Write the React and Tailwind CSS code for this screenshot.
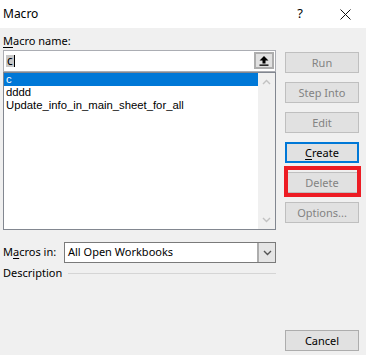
import React from 'react';

const font = { fontFamily: '"Noto Sans", "Open Sans", sans-serif' };

function DlgButton({ children, disabled, focused }) {
  return (
    <div
      className={
        'w-[74px] h-[21px] flex items-center justify-center text-[11px] leading-none ' +
        (focused
          ? 'border-2 border-[#0078d7] bg-[#e1e1e1] text-black'
          : disabled
          ? 'border border-[#bfbfbf] bg-[#e1e1e1] text-[#838383]'
          : 'border border-[#adadad] bg-[#e1e1e1] text-black')
      }
    >
      {children}
    </div>
  );
}

function Chevron({ up, className }) {
  return (
    <svg width="9" height="6" viewBox="0 0 9 6" className={className}>
      <path
        d={up ? 'M1 5 L4.5 1.5 L8 5' : 'M1 1 L4.5 4.5 L8 1'}
        fill="none"
        stroke="currentColor"
        strokeWidth="1.4"
      />
    </svg>
  );
}

export default function App() {
  const macros = ['c', 'dddd', 'Update_info_in_main_sheet_for_all'];

  return (
    <div className="w-[366px] h-[355px] bg-[#f0f0f0] flex flex-col relative text-black" style={font}>
      {/* Title bar */}
      <div className="h-[28px] bg-white flex items-center text-[12px] shrink-0">
        <span className="ml-[3px]">Macro</span>
        <span className="ml-auto mr-[37px] text-[13px]">?</span>
        <svg width="11" height="11" viewBox="0 0 11 11" className="mr-[15px]">
          <path d="M0.5 0.5 L10.5 10.5 M10.5 0.5 L0.5 10.5" stroke="#111" strokeWidth="1" />
        </svg>
      </div>

      <div className="flex flex-1">
        {/* Left column */}
        <div className="w-[276px] pl-[3px] flex flex-col">
          <div className="h-[14px] mt-[6px] text-[11px] leading-[14px]">
            <span className="underline underline-offset-2">M</span>acro name:
          </div>
          <div className="mt-[2px] h-[22px] flex border border-[#abadb3] bg-white">
            <div className="flex-1 flex items-center pl-[2px] text-[12px]">
              <span className="bg-[#c8c8c8] px-[1px] leading-[12px]">c</span>
              <span className="w-px h-[12px] bg-black" />
            </div>
            <div className="w-[20px] h-[17px] mt-[1px] mr-[1px] border-2 border-[#adadad] bg-[#e1e1e1] flex items-center justify-center">
              <svg width="10" height="11" viewBox="0 0 10 11">
                <path d="M5 1 L9.5 5.5 L6.5 5.5 L6.5 8.5 L3.5 8.5 L3.5 5.5 L0.5 5.5 Z" fill="#000" />
                <rect x="0.5" y="9.5" width="9" height="1.3" fill="#000" />
              </svg>
            </div>
          </div>
          <div className="h-[158px] border border-[#828790] bg-white flex">
            <div className="flex-1 text-[11.3px] leading-[13px] font-['Liberation_Sans',sans-serif]">
              {macros.map((m, i) => (
                <div
                  key={m}
                  className={
                    'h-[13px] pl-[2px] ' + (i === 0 ? 'bg-[#0078d7] text-white' : '')
                  }
                >
                  {m}
                </div>
              ))}
            </div>
            <div className="w-[17px] bg-[#f0f0f0] flex flex-col items-center justify-between py-[6px] text-[#c2c2c2]">
              <Chevron up />
              <Chevron />
            </div>
          </div>

          <div className="mt-[12px] h-[21px] flex items-center">
            <div className="w-[61px] text-[11px]">
              M<span className="underline underline-offset-2">a</span>cros in:
            </div>
            <div className="flex-1 h-[21px] flex border border-[#7a7a7a] bg-white">
              <div className="flex-1 flex items-center pl-[3px] text-[11px]">All Open Workbooks</div>
              <div className="w-[18px] bg-[#e5e5e5] border-l-2 border-[#adadad] flex items-center justify-center text-[#555]">
                <Chevron />
              </div>
            </div>
          </div>

          <div className="mt-[3px] h-[14px] flex items-center text-[11px]">
            <span>Description</span>
            <div className="flex-1 ml-[6px] h-px bg-[#d5d5d5]" />
          </div>
        </div>

        {/* Right column */}
        <div className="ml-[9px] pt-[24px] pb-[4px] flex flex-col gap-[9px]">
          <DlgButton disabled>Run</DlgButton>
          <DlgButton disabled>Step Into</DlgButton>
          <DlgButton disabled>Edit</DlgButton>
          <DlgButton focused>
            <span className="underline underline-offset-2">C</span>reate
          </DlgButton>
          <DlgButton disabled>Delete</DlgButton>
          <DlgButton disabled>Options...</DlgButton>
          <div className="flex-1" />
          <DlgButton>Cancel</DlgButton>
        </div>
      </div>

      {/* red annotation box */}
      <div className="absolute left-[284px] top-[166px] w-[77px] h-[31px] border-4 border-[#ed1c24]" />
    </div>
  );
}
